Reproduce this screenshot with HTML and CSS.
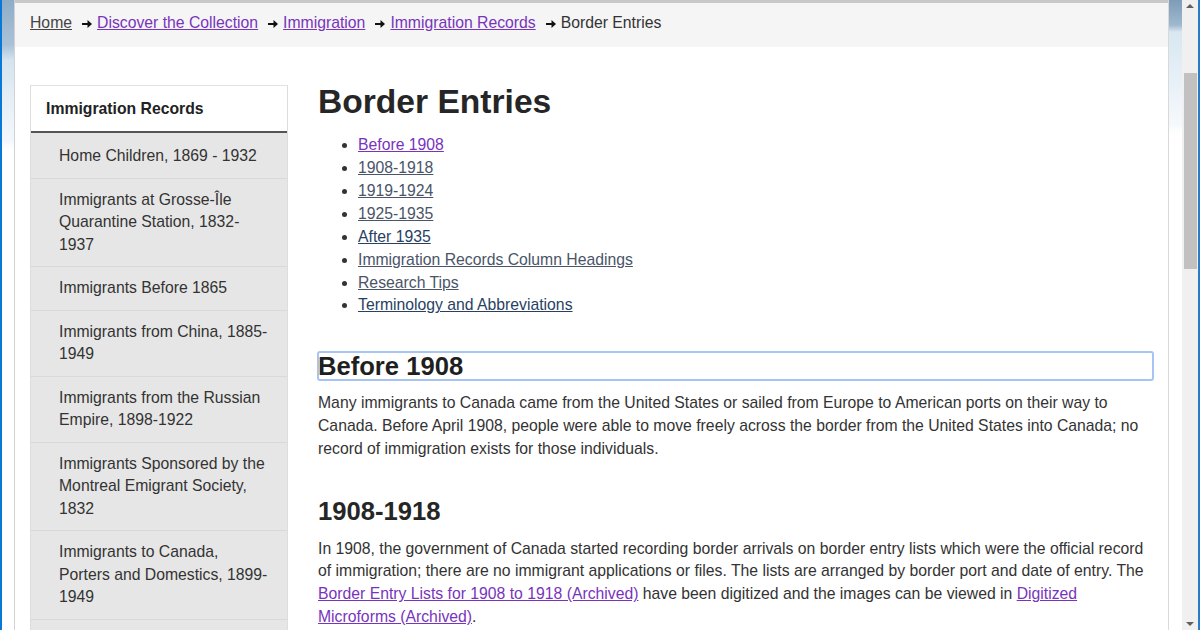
FILE: index.html
```html
<!DOCTYPE html>
<html lang="en">
<head>
<meta charset="utf-8">
<title>Border Entries</title>
<link rel="stylesheet" href="styles.css">
</head>
<body>
<div class="frame">
  <div class="edge-left"></div>
  <div class="strip strip-left"></div>
  <div class="viewport">
    <div class="topband"></div>
    <nav class="breadcrumb">
      <a class="crumb crumb-home" href="#">Home</a>
      <svg class="sep" width="10" height="8" viewBox="0 0 10 8"><path d="M0 3.1h5.5v-3.1l4.5 4-4.5 4v-3.1h-5.5z" fill="#111"/></svg>
      <a class="crumb" href="#">Discover the Collection</a>
      <svg class="sep" width="10" height="8" viewBox="0 0 10 8"><path d="M0 3.1h5.5v-3.1l4.5 4-4.5 4v-3.1h-5.5z" fill="#111"/></svg>
      <a class="crumb" href="#">Immigration</a>
      <svg class="sep" width="10" height="8" viewBox="0 0 10 8"><path d="M0 3.1h5.5v-3.1l4.5 4-4.5 4v-3.1h-5.5z" fill="#111"/></svg>
      <a class="crumb" href="#">Immigration Records</a>
      <svg class="sep" width="10" height="8" viewBox="0 0 10 8"><path d="M0 3.1h5.5v-3.1l4.5 4-4.5 4v-3.1h-5.5z" fill="#111"/></svg>
      <span class="crumb-current">Border Entries</span>
    </nav>
    <div class="container">
      <aside class="sidenav">
        <div class="sidenav-head">Immigration Records</div>
        <ul class="sidenav-list">
          <li>Home Children, 1869 - 1932</li>
          <li>Immigrants at Grosse-Île Quarantine Station, 1832-1937</li>
          <li>Immigrants Before 1865</li>
          <li>Immigrants from China, 1885-1949</li>
          <li>Immigrants from the Russian Empire, 1898-1922</li>
          <li>Immigrants Sponsored by the Montreal Emigrant Society, 1832</li>
          <li>Immigrants to Canada, Porters and Domestics, 1899-1949</li>
          <li class="sidenav-more"></li>
        </ul>
      </aside>
      <main class="main">
        <h1>Border Entries</h1>
        <ul class="toc">
          <li><a class="visited" href="#">Before 1908</a></li>
          <li><a class="muted" href="#">1908-1918</a></li>
          <li><a class="muted" href="#">1919-1924</a></li>
          <li><a class="muted" href="#">1925-1935</a></li>
          <li><a class="navy" href="#">After 1935</a></li>
          <li><a class="muted" href="#">Immigration Records Column Headings</a></li>
          <li><a class="muted" href="#">Research Tips</a></li>
          <li><a class="navy" href="#">Terminology and Abbreviations</a></li>
        </ul>
        <h2 class="focused">Before 1908</h2>
        <p>Many immigrants to Canada came from the United States or sailed from Europe to American ports on their way to Canada. Before April 1908, people were able to move freely across the border from the United States into Canada; no record of immigration exists for those individuals.</p>
        <h2>1908-1918</h2>
        <p>In 1908, the government of Canada started recording border arrivals on border entry lists which were the official record of immigration; there are no immigrant applications or files. The lists are arranged by border port and date of entry. The <a class="visited" href="#">Border Entry Lists for 1908 to 1918 (Archived)</a> have been digitized and the images can be viewed in <a class="visited" href="#">Digitized Microforms (Archived)</a>.</p>
      </main>
    </div>
  </div>
  <div class="strip strip-right"></div>
  <div class="scrollbar">
    <div class="sb-btn"><span class="arrow-up"></span></div>
    <div class="sb-track"><div class="sb-thumb"></div></div>
    <div class="sb-btn sb-btn-down"><span class="arrow-down"></span></div>
  </div>
  <div class="edge-right"></div>
</div>
</body>
</html>
```

FILE: styles.css
```css
* { box-sizing: border-box; }

html, body {
  margin: 0;
  padding: 0;
  width: 1200px;
  height: 630px;
  overflow: hidden;
  background: #fff;
}

body {
  font-family: "Liberation Sans", Arial, sans-serif;
  font-size: 15.75px;
  line-height: 1.428571;
  color: #333;
}

.frame {
  display: flex;
  width: 1200px;
  height: 630px;
  overflow: hidden;
}

.edge-left {
  width: 2px;
  flex: none;
  background: #0a78d6;
}

.edge-right {
  width: 2px;
  flex: none;
  background: #2a7ac8;
}

.strip {
  flex: none;
}

.strip-left {
  width: 13px;
  border-right: 1px solid #d2d2d2;
  background: linear-gradient(to bottom, #8eacc7 0, #a9c2d8 45px, #d3e3ef 60px, #e6eff6 100px, #f3f7fb 140px, #fff 150px);
}

.strip-right {
  width: 14px;
  border-left: 1px solid #d9d9d9;
  background: linear-gradient(to bottom, #7e9cb8 0, #9fb8cd 25px, #d9e7f1 32px, #e7f0f7 80px, #f6f9fc 125px, #fff 135px);
}

.viewport {
  width: 1153px;
  flex: none;
  display: flex;
  flex-direction: column;
  overflow: hidden;
}

.topband {
  height: 3px;
  flex: none;
  background: #c8c8c8;
}

.breadcrumb {
  flex: none;
  height: 44px;
  display: flex;
  align-items: center;
  padding: 0 15px 4px 15px;
  background: #f5f5f5;
}

.crumb {
  color: #7834bc;
  text-decoration: underline;
}

.crumb-home {
  color: #444;
}

.crumb-current {
  color: #333;
}

.sep {
  margin: 1px 5px 0 10px;
  flex: none;
}

.container {
  display: flex;
  align-items: flex-start;
  padding: 36px 15px 0 15px;
}

.sidenav {
  width: 258px;
  flex: none;
  margin-top: 2px;
  border: 1px solid #ddd;
  border-top: 1px solid #e3e3e3;
}

.sidenav-head {
  padding: 12px 15px 11px 15px;
  font-weight: bold;
  color: #222;
  background: #fff;
  border-bottom: 2px solid #555;
}

.sidenav-list {
  list-style: none;
  margin: 0;
  padding: 0;
}

.sidenav-list li {
  padding: 10px 14px 10px 28px;
  line-height: 22.5px;
  background: #e6e6e6;
  border-top: 1px solid #d9d9d9;
  color: #333;
}

.sidenav-list li:first-child {
  border-top: none;
  padding-top: 12px;
}

.sidenav-list li.sidenav-more {
  height: 44px;
}

.main {
  width: 835px;
  flex: none;
  margin-left: 30px;
}

h1 {
  font-size: 33.6px;
  line-height: 37.4px;
  font-weight: bold;
  color: #262626;
  margin: 0 0 14px 0;
}

.toc {
  margin: 0;
  padding-left: 40px;
}

.toc li {
  line-height: 22.86px;
}

a.visited { color: #7834bc; }
a.muted { color: #4a5568; }
a.navy { color: #284162; }

h2 {
  font-size: 25.6px;
  line-height: 28.6px;
  font-weight: bold;
  color: #262626;
  margin: 36px 0 12px 0;
}

h2.focused {
  margin-top: 34.5px;
  color: #1f1f1f;
  outline: 2px solid #a8c4f2;
  outline-offset: -1px;
  border-radius: 2px;
}

p {
  margin: 0 0 11px 0;
  line-height: 22.86px;
}

.scrollbar {
  width: 16px;
  flex: none;
  display: flex;
  flex-direction: column;
  background: #f0f0f0;
}

.sb-btn {
  height: 17px;
  flex: none;
  display: flex;
  justify-content: center;
  align-items: center;
}

.sb-btn-down {
  align-items: flex-end;
  padding-bottom: 4px;
}

.arrow-up {
  width: 0;
  height: 0;
  border-left: 4px solid transparent;
  border-right: 4px solid transparent;
  border-bottom: 4px solid #606060;
  margin-bottom: 5px;
}

.arrow-down {
  width: 0;
  height: 0;
  border-left: 4px solid transparent;
  border-right: 4px solid transparent;
  border-top: 4px solid #606060;
}

.sb-track {
  flex: 1;
  padding: 0 1px 0 2px;
}

.sb-thumb {
  margin-top: 56px;
  height: 196px;
  background: #c1c1c1;
}
```
